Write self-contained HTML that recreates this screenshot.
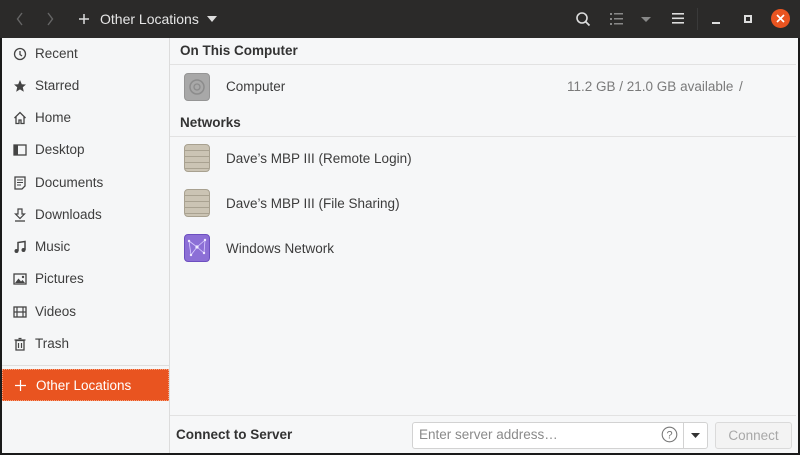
<!DOCTYPE html>
<html><head><meta charset="utf-8"><style>
*{margin:0;padding:0;box-sizing:border-box}
body{width:800px;height:455px;background:#1a1a1a;font-family:"Liberation Sans",sans-serif;font-size:13.5px;color:#3c3c3c;position:relative;overflow:hidden}
.hdr{position:absolute;left:0;top:0;width:800px;height:38px;background:#2b2a29}
.win{position:absolute;left:2px;top:38px;width:796px;height:415px;background:#f6f7f8}
.side{position:absolute;left:0;top:0;width:168px;height:415px;background:#f5f6f7;border-right:1px solid #dcdcdc}
.si{position:absolute;left:0;height:20px;line-height:20px;padding-left:33px;color:#3d3d3d}
.si svg{position:absolute;left:11px;top:3px}
.sep{position:absolute;left:0;width:168px;top:327px;border-top:1px solid #dedede}
.ol{position:absolute;left:0;top:331px;width:167px;height:32px;background:#e95420;color:#fff;line-height:32px;padding-left:33px;border:1px dotted #f7a27f}
.h{position:absolute;left:180px;font-weight:bold;color:#333;font-size:13.5px}
.ln{position:absolute;left:170px;width:626px;border-top:1px solid #e2e2e2}
.row{position:absolute;left:226px;color:#3c3c3c}
.ic{position:absolute;left:184px;width:26px;height:28px;border-radius:4px}
.t{color:#fff}
</style></head><body>
<div class="hdr">
<svg style="position:absolute;left:16px;top:12px" width="8" height="14"><path d="M6 1L1.5 7L6 13" stroke="#666" stroke-width="1.4" fill="none"/></svg>
<svg style="position:absolute;left:46px;top:12px" width="8" height="14"><path d="M2 1L6.5 7L2 13" stroke="#666" stroke-width="1.4" fill="none"/></svg>
<svg style="position:absolute;left:78px;top:13px" width="12" height="12"><path d="M6 1V11M1 6H11" stroke="#ddd" stroke-width="1.5"/></svg>
<div style="position:absolute;left:100px;top:11px;color:#e6e6e6;font-size:14px">Other Locations</div>
<svg style="position:absolute;left:207px;top:16px" width="10" height="6"><path d="M0 0H10L5 6Z" fill="#ddd"/></svg>
<svg style="position:absolute;left:575px;top:11px" width="16" height="16"><circle cx="7" cy="7" r="5" stroke="#ddd" stroke-width="1.6" fill="none"/><path d="M10.5 10.5L14.5 14.5" stroke="#ddd" stroke-width="1.8"/></svg>
<svg style="position:absolute;left:610px;top:13px" width="13" height="12"><g fill="#888"><rect x="0" y="0" width="2" height="2"/><rect x="0" y="5" width="2" height="2"/><rect x="0" y="10" width="2" height="2"/><rect x="4" y="0" width="9" height="1.5"/><rect x="4" y="5" width="9" height="1.5"/><rect x="4" y="10" width="9" height="1.5"/></g></svg>
<svg style="position:absolute;left:641px;top:17px" width="10" height="5"><path d="M0 0H10L5 5Z" fill="#888"/></svg>
<svg style="position:absolute;left:672px;top:13px" width="12" height="11"><g fill="#ddd"><rect y="0" width="12" height="1.6"/><rect y="4.5" width="12" height="1.6"/><rect y="9" width="12" height="1.6"/></g></svg>
<div style="position:absolute;left:697px;top:8px;height:22px;border-left:1px solid #3a3a3a"></div>
<div style="position:absolute;left:712px;top:22px;width:8px;height:2px;background:#ddd"></div>
<div style="position:absolute;left:744px;top:15px;width:8px;height:8px;border:2px solid #ddd"></div>
<div style="position:absolute;left:771px;top:9px;width:19px;height:19px;border-radius:50%;background:#e95420"></div>
<svg style="position:absolute;left:776px;top:14px" width="9" height="9"><path d="M1 1L8 8M8 1L1 8" stroke="#fff" stroke-width="1.7"/></svg>
</div>
<div class="win">
<div class="side">
<div class="si" style="top:6px"><svg width="14" height="14"><circle cx="7" cy="7" r="5.5" stroke="#444" stroke-width="1.3" fill="none"/><path d="M7 4V7.5L9 9" stroke="#444" stroke-width="1.3" fill="none"/></svg>Recent</div>
<div class="si" style="top:38px"><svg width="14" height="14"><path d="M7 1L8.8 5.2L13 5.5L9.8 8.3L10.8 12.8L7 10.4L3.2 12.8L4.2 8.3L1 5.5L5.2 5.2Z" fill="#444"/></svg>Starred</div>
<div class="si" style="top:70px"><svg width="14" height="14"><path d="M1.5 7L7 1.5L12.5 7M3 6V12.5H6V9H8V12.5H11V6" stroke="#444" stroke-width="1.3" fill="none"/></svg>Home</div>
<div class="si" style="top:102px"><svg width="14" height="14"><rect x="1" y="2" width="12" height="10" stroke="#444" stroke-width="1.3" fill="none"/><rect x="1" y="2" width="4" height="10" fill="#444"/></svg>Desktop</div>
<div class="si" style="top:135px"><svg width="14" height="14"><path d="M2 1H12V10L9 13H2Z" stroke="#444" stroke-width="1.3" fill="none"/><path d="M4 4H10M4 6.5H10M4 9H8" stroke="#444" stroke-width="1.1"/></svg>Documents</div>
<div class="si" style="top:167px"><svg width="14" height="14"><path d="M5 1H9V6H11.5L7 10.5L2.5 6H5Z" stroke="#444" stroke-width="1.2" fill="none"/><path d="M2 13H12" stroke="#444" stroke-width="1.3"/></svg>Downloads</div>
<div class="si" style="top:199px"><svg width="14" height="14"><path d="M5 11V2.5L12 1.5V10" stroke="#444" stroke-width="1.5" fill="none"/><circle cx="3.5" cy="11" r="2" fill="#444"/><circle cx="10.5" cy="10" r="2" fill="#444"/></svg>Music</div>
<div class="si" style="top:231px"><svg width="14" height="14"><rect x="1" y="2" width="12" height="10" stroke="#444" stroke-width="1.3" fill="none"/><path d="M2 11L5.5 6.5L8 9.5L9.5 8L12 11Z" fill="#444"/><circle cx="10" cy="5" r="1.2" fill="#444"/></svg>Pictures</div>
<div class="si" style="top:264px"><svg width="14" height="14"><rect x="1" y="2" width="12" height="10" stroke="#444" stroke-width="1.3" fill="none"/><path d="M1 7H13M4 2V12M10 2V12" stroke="#444" stroke-width="1.2"/></svg>Videos</div>
<div class="si" style="top:296px"><svg width="14" height="14"><path d="M3 3.5H11V13H3Z" stroke="#444" stroke-width="1.3" fill="none"/><path d="M1.5 3H12.5M5.5 1.5H8.5M5.5 6V11M8.5 6V11" stroke="#444" stroke-width="1.2"/></svg>Trash</div>
<div class="sep"></div>
<div class="ol"><svg style="position:absolute;left:12px;top:10px" width="11" height="11"><path d="M5.5 0V11M0 5.5H11" stroke="#fff" stroke-width="1.2"/></svg>Other Locations</div>
</div>
</div>
<div class="h" style="top:43px">On This Computer</div>
<div class="ln" style="top:64px"></div>
<div class="ic" style="top:73px;background:#a8a8a8;border:1px solid #959595"><svg width="24" height="26"><circle cx="12" cy="13" r="7" stroke="#8c8c8c" stroke-width="1.5" fill="none"/><circle cx="12" cy="13" r="3" stroke="#8c8c8c" stroke-width="1.3" fill="none"/></svg></div>
<div class="row" style="top:79px">Computer</div>
<div style="position:absolute;left:567px;top:79px;color:#7a7a7a">11.2 GB / 21.0 GB available</div>
<div style="position:absolute;left:739px;top:79px;color:#7a7a7a">/</div>
<div class="h" style="top:115px">Networks</div>
<div class="ln" style="top:136px"></div>
<div class="ic" style="top:144px;background:repeating-linear-gradient(#cbc4b4 0 5px,#a9a291 5px 6px);border:1px solid #a8a190"></div>
<div class="row" style="top:151px">Dave’s MBP III (Remote Login)</div>
<div class="ic" style="top:189px;background:repeating-linear-gradient(#cbc4b4 0 5px,#a9a291 5px 6px);border:1px solid #a8a190"></div>
<div class="row" style="top:196px">Dave’s MBP III (File Sharing)</div>
<div class="ic" style="top:234px;background:#8c6fd6;border:1px solid #6d4fc0"><svg width="24" height="26"><path d="M4 6L12 12L20 5M12 12L6 20M12 12L19 18M4 6L6 20M20 5L19 18" stroke="#d9ccff" stroke-width="0.8" fill="none"/><g fill="#f0eaff"><circle cx="12" cy="12" r="1.6"/><circle cx="4" cy="6" r="1.2"/><circle cx="20" cy="5" r="1.2"/><circle cx="6" cy="20" r="1.2"/><circle cx="19" cy="18" r="1.2"/></g></svg></div>
<div class="row" style="top:241px">Windows Network</div>
<div class="ln" style="top:415px"></div>
<div style="position:absolute;left:176px;top:427px;font-weight:bold;color:#333">Connect to Server</div>
<div style="position:absolute;left:412px;top:422px;width:296px;height:27px;background:#fff;border:1px solid #d2d2d2;border-radius:3px"></div>
<div style="position:absolute;left:683px;top:423px;height:25px;border-left:1px solid #d2d2d2"></div>
<div style="position:absolute;left:419px;top:427px;color:#8a8a8a">Enter server address…</div>
<svg style="position:absolute;left:661px;top:426px" width="17" height="17"><circle cx="8.5" cy="8.5" r="7.3" stroke="#777" stroke-width="1.1" fill="none"/><text x="8.5" y="12.5" font-size="11" text-anchor="middle" fill="#777" font-family="Liberation Sans">?</text></svg>
<svg style="position:absolute;left:691px;top:433px" width="9" height="5"><path d="M0 0H9L4.5 5Z" fill="#333"/></svg>
<div style="position:absolute;left:715px;top:422px;width:77px;height:27px;background:#f3f3f3;border:1px solid #dadada;border-radius:3px;color:#a8a8a8;line-height:25px;text-align:center">Connect</div>
</body></html>
